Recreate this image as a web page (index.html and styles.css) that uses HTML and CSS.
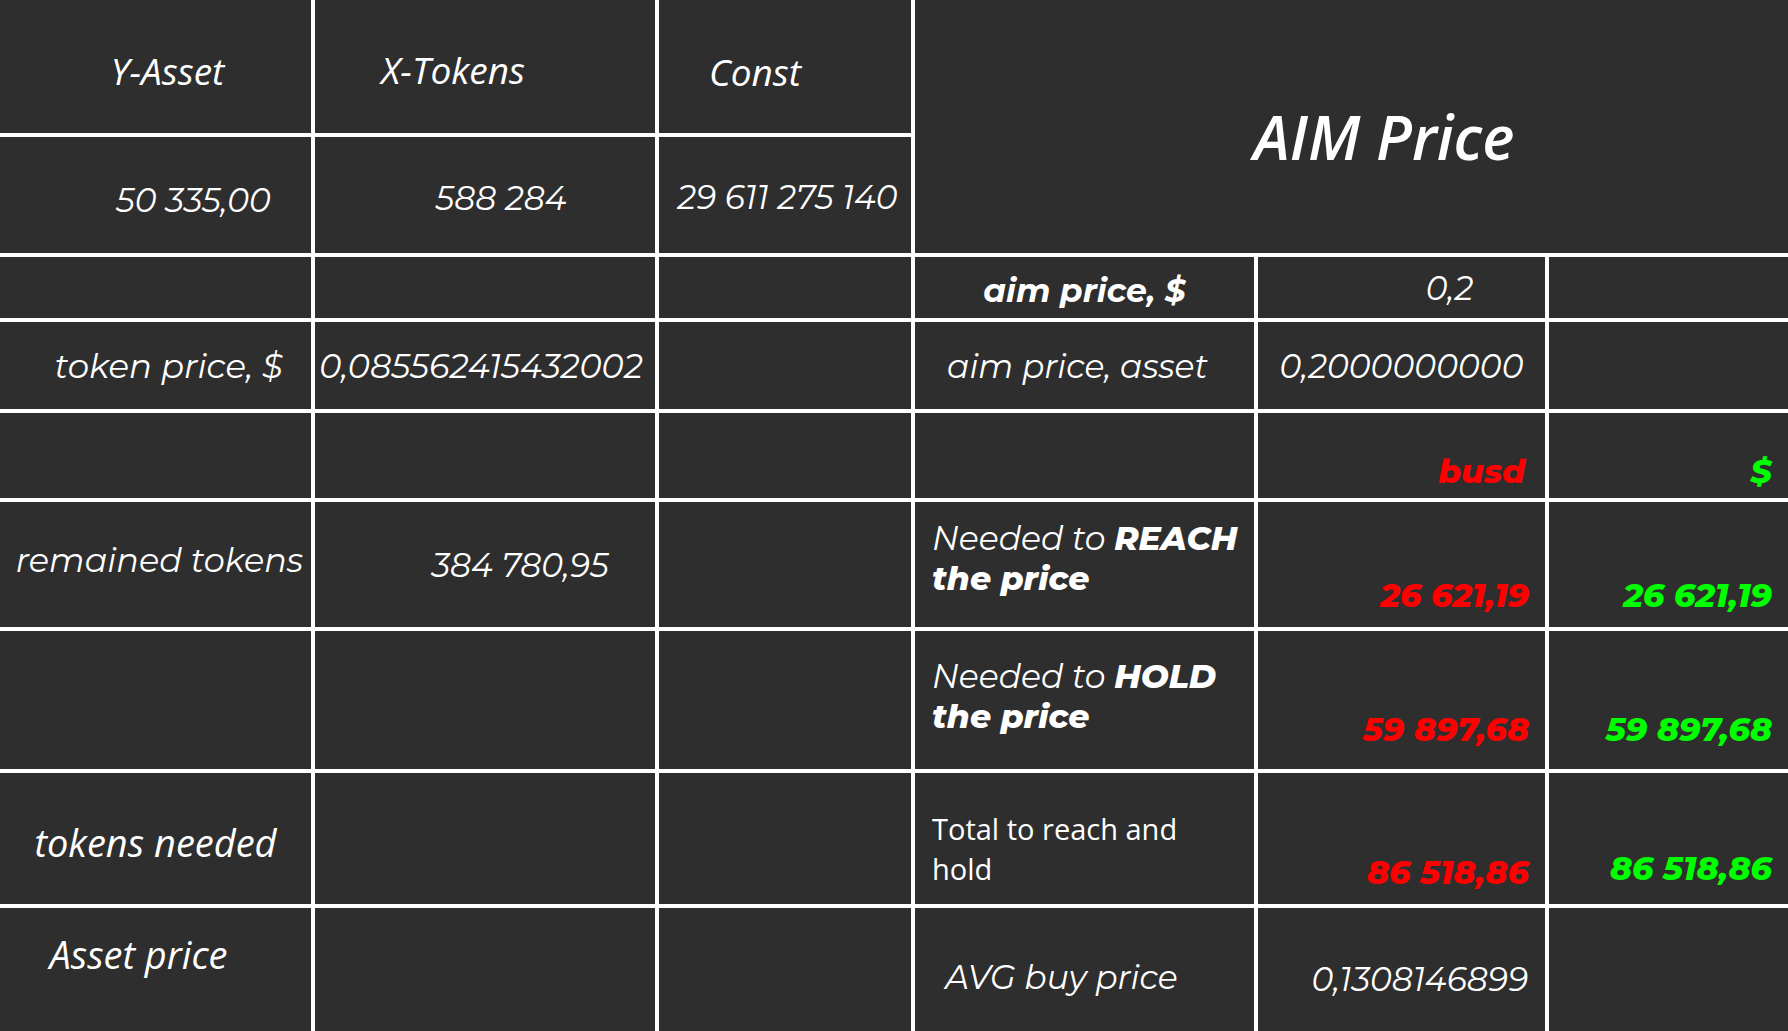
FILE: index.html
```html
<!DOCTYPE html>
<html lang="en">
<head>
<meta charset="utf-8">
<title>AIM Price</title>
<link rel="stylesheet" href="styles.css">
</head>
<body>
<div class="sheet">
  <!-- row 1 -->
  <div class="cell os c-yasset">Y-Asset</div>
  <div class="cell os c-xtokens">X-Tokens</div>
  <div class="cell os c-const">Const</div>
  <div class="cell os c-aim">AIM Price</div>
  <!-- row 2 -->
  <div class="cell c-y-val">50 335,00</div>
  <div class="cell c-x-val">588 284</div>
  <div class="cell c-const-val">29 611 275 140</div>
  <!-- row 3 -->
  <div class="cell"></div>
  <div class="cell"></div>
  <div class="cell"></div>
  <div class="cell bold c-aimusd">aim price, $</div>
  <div class="cell c-aimusd-val">0,2</div>
  <div class="cell"></div>
  <!-- row 4 -->
  <div class="cell c-tokprice">token price, $</div>
  <div class="cell c-tokprice-val">0,085562415432002</div>
  <div class="cell"></div>
  <div class="cell c-aimasset">aim price, asset</div>
  <div class="cell">0,2000000000</div>
  <div class="cell"></div>
  <!-- row 5 -->
  <div class="cell"></div>
  <div class="cell"></div>
  <div class="cell"></div>
  <div class="cell"></div>
  <div class="cell num red pb-7 c-busd">busd</div>
  <div class="cell num green pb-7">$</div>
  <!-- row 6 -->
  <div class="cell c-remained">remained tokens</div>
  <div class="cell c-remained-val">384 780,95</div>
  <div class="cell"></div>
  <div class="cell label c-reach"><span>Needed to <b>REACH</b><br><b>the price</b></span></div>
  <div class="cell num red pb-12">26 621,19</div>
  <div class="cell num green pb-12">26 621,19</div>
  <!-- row 7 -->
  <div class="cell"></div>
  <div class="cell"></div>
  <div class="cell"></div>
  <div class="cell label c-hold"><span>Needed to <b>HOLD</b><br><b>the price</b></span></div>
  <div class="cell num red pb-20">59 897,68</div>
  <div class="cell num green pb-20">59 897,68</div>
  <!-- row 8 -->
  <div class="cell os c-needed">tokens needed</div>
  <div class="cell"></div>
  <div class="cell"></div>
  <div class="cell label upright c-total"><span>Total to reach and<br>hold</span></div>
  <div class="cell num red pb-12">86 518,86</div>
  <div class="cell num green pb-16">86 518,86</div>
  <!-- row 9 -->
  <div class="cell os c-assetprice">Asset price</div>
  <div class="cell"></div>
  <div class="cell"></div>
  <div class="cell c-avg">AVG buy price</div>
  <div class="cell c-avg-val">0,1308146899</div>
  <div class="cell"></div>
</div>
</body>
</html>
```

FILE: styles.css
```css
html, body {
  margin: 0;
  padding: 0;
  background: #2e2e2e;
}

.sheet {
  display: grid;
  grid-template-columns: 311px 340px 252px 339px 287px 1fr;
  grid-template-rows: 133px 116px 61px 87px 85px 125px 138px 131px 130px;
  gap: 4px;
  background: #ffffff;
  width: 1788px;
  height: 1031px;
  overflow: hidden;
}

.cell {
  background: #2e2e2e;
  color: #ffffff;
  display: flex;
  align-items: center;
  justify-content: center;
  box-sizing: border-box;
  font-family: "Montserrat", "Inter", "DejaVu Sans", sans-serif;
  font-style: italic;
  font-weight: 400;
  font-size: 33px;
  line-height: 40px;
  white-space: nowrap;
}

.os {
  font-family: "Open Sans", "Noto Sans", sans-serif;
  font-size: 37px;
}

.bold { font-weight: 700; }

.label {
  justify-content: flex-start;
  padding-left: 17px;
  line-height: 40px;
  font-size: 33px;
}
.label b { font-weight: 800; }

.upright {
  font-style: normal;
  font-family: "Open Sans", "Noto Sans", sans-serif;
  font-size: 29px;
}

.num {
  justify-content: flex-end;
  align-items: flex-end;
  padding-right: 16px;
  font-weight: 800;
  font-size: 33px;
}
.red { color: #ff0000; }
.green { color: #00ff00; }
.pb-7 { padding-bottom: 7px; }
.pb-12 { padding-bottom: 12px; }
.pb-16 { padding-bottom: 16px; }
.pb-20 { padding-bottom: 20px; }

/* individual cells */
.c-yasset { padding-left: 24px; padding-top: 9px; }
.c-xtokens { padding-right: 64px; padding-top: 6px; }
.c-const { padding-right: 60px; padding-top: 11px; }
.c-aim {
  grid-column: 4 / 7;
  grid-row: 1 / 3;
  font-size: 61px;
  font-weight: 600;
  padding-left: 65px;
  padding-top: 21px;
}

.c-y-val { padding-left: 76px; padding-top: 10px; }
.c-x-val { padding-left: 32px; padding-top: 6px; }
.c-const-val { padding-left: 5px; padding-top: 4px; }

.c-aimusd { padding-top: 5px; }
.c-aimusd-val { padding-left: 96px; }

.c-tokprice { justify-content: flex-end; padding-right: 28px; font-size: 34px; }
.c-tokprice-val { padding-right: 8px; font-size: 33.5px; }
.c-aimasset { padding-right: 14px; }

.c-busd { padding-right: 20px; }

.c-remained { padding-bottom: 10px; padding-left: 8px; font-size: 33.5px; }
.c-remained-val { padding-left: 70px; }
.c-reach { padding-bottom: 13px; }
.c-hold { padding-bottom: 8px; }
.c-total { padding-top: 21px; font-size: 29px; }

.c-needed { padding-top: 6px; font-size: 38px; }

.c-assetprice { align-items: flex-start; padding-right: 34px; padding-top: 26px; font-size: 38px; }
.c-avg { align-items: flex-start; padding-right: 46px; padding-top: 49px; }
.c-avg-val {
  align-items: flex-start;
  justify-content: flex-end;
  padding-right: 17px;
  padding-top: 51px;
}
```
